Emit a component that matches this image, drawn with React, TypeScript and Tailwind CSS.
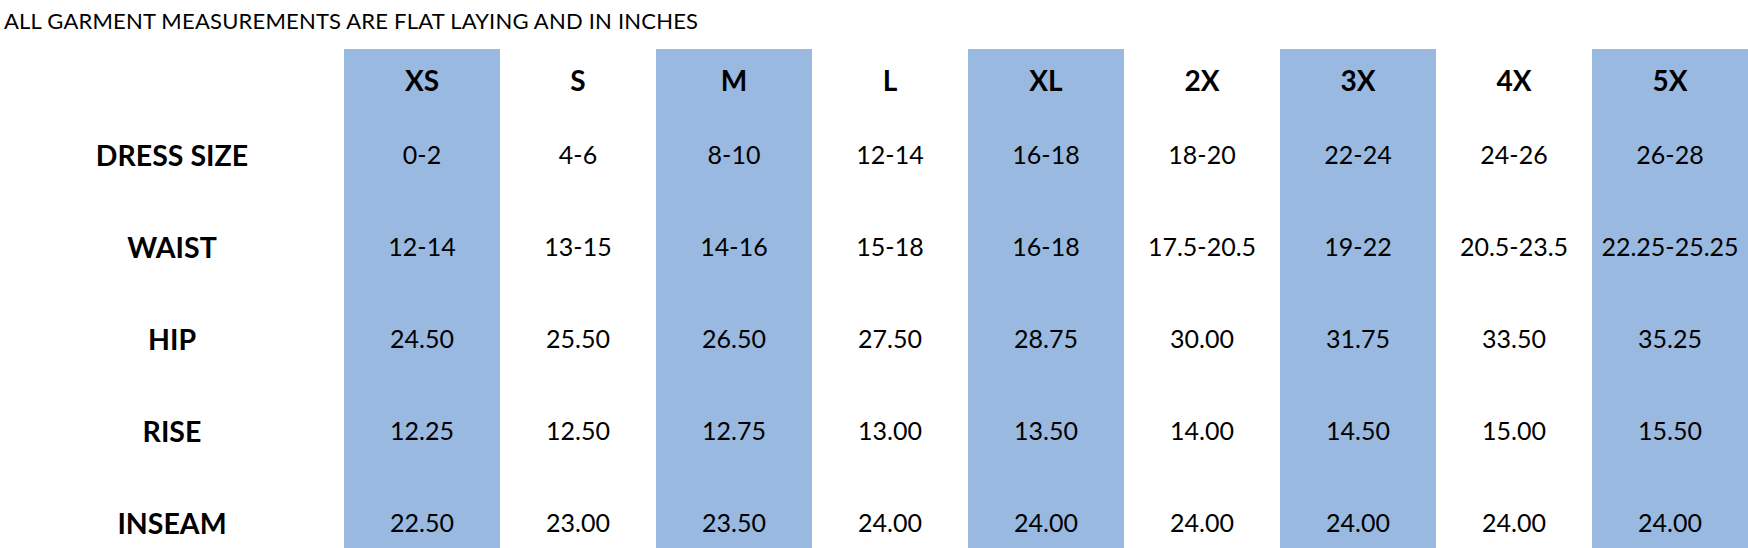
import React from 'react';

const sizes = ['XS', 'S', 'M', 'L', 'XL', '2X', '3X', '4X', '5X'];

const rows = [
  { label: 'DRESS SIZE', values: ['0-2', '4-6', '8-10', '12-14', '16-18', '18-20', '22-24', '24-26', '26-28'] },
  { label: 'WAIST', values: ['12-14', '13-15', '14-16', '15-18', '16-18', '17.5-20.5', '19-22', '20.5-23.5', '22.25-25.25'] },
  { label: 'HIP', values: ['24.50', '25.50', '26.50', '27.50', '28.75', '30.00', '31.75', '33.50', '35.25'] },
  { label: 'RISE', values: ['12.25', '12.50', '12.75', '13.00', '13.50', '14.00', '14.50', '15.00', '15.50'] },
  { label: 'INSEAM', values: ['22.50', '23.00', '23.50', '24.00', '24.00', '24.00', '24.00', '24.00', '24.00'] },
];

const App: React.FC = () => {
  return (
    <div className="w-[1748px] h-[548px] overflow-hidden bg-white text-black font-['Lato',sans-serif]">
      <div className="h-[49px] pt-[8px] pl-[4px] text-[22px] leading-[1.2] tracking-[0.2px]">
        ALL GARMENT MEASUREMENTS ARE FLAT LAYING AND IN INCHES
      </div>

      <div className="grid grid-cols-[344px_repeat(9,156px)]">
        {/* header row */}
        <div className="h-[60px]"></div>
        {sizes.map((size, i) => (
          <div
            key={size}
            className={`h-[60px] pt-[2px] flex items-center justify-center text-[28px] font-bold ${
              i % 2 === 0 ? 'bg-[#99b9e1]' : ''
            }`}
          >
            {size}
          </div>
        ))}

        {rows.map((row) => (
          <React.Fragment key={row.label}>
            <div className="h-[92px] flex items-center justify-center text-[28.5px] font-bold">
              {row.label}
            </div>
            {row.values.map((v, i) => (
              <div
                key={i}
                className={`h-[92px] flex items-center justify-center text-[25px] whitespace-nowrap ${
                  i % 2 === 0 ? 'bg-[#99b9e1]' : ''
                }`}
              >
                {v}
              </div>
            ))}
          </React.Fragment>
        ))}
      </div>
    </div>
  );
};

export default App;
